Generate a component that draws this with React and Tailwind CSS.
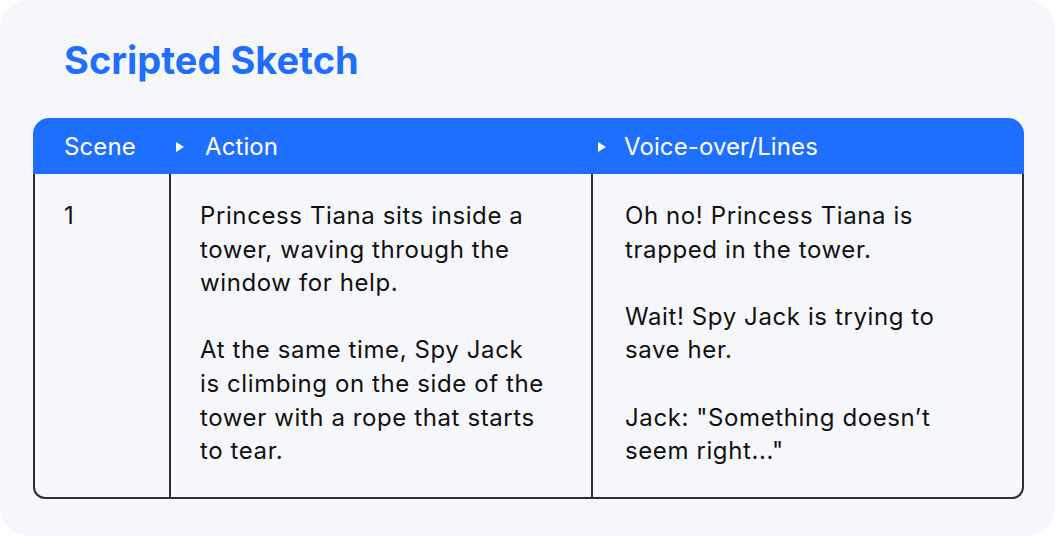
import React from "react";

const font = { fontFamily: "Inter, 'Noto Sans', sans-serif" };

function Arrow() {
  return (
    <svg width="8" height="10" viewBox="0 0 8 10" className="shrink-0">
      <path d="M0 0 L8 5 L0 10 Z" fill="white" />
    </svg>
  );
}

export default function App() {
  return (
    <div className="w-[1055px] h-[536px] bg-white" style={font}>
      <div className="w-full h-full rounded-[28px] bg-[#f6f7fb] pl-[33px] pr-[31px] pt-[36px]">
        <h1 className="pl-[31px] text-[38px] leading-[48px] font-bold text-[#1f6fff] tracking-[0px]">
          Scripted Sketch
        </h1>
        <div className="mt-[34px]">
          <div className="flex h-[56px] items-center rounded-t-[16px] bg-[#1f6fff] text-white text-[24px] tracking-[0.1px] pt-[1px]">
            <div className="w-[138px] pl-[31px]">Scene</div>
            <div className="w-[422px] flex items-center pl-[5px]">
              <Arrow />
              <span className="ml-[21px]">Action</span>
            </div>
            <div className="flex-1 flex items-center pl-[5px]">
              <Arrow />
              <span className="ml-[18px]">Voice-over/Lines</span>
            </div>
          </div>
          <div className="flex border-2 border-t-0 border-[#2c2c3a] rounded-b-[12px] text-[24px] leading-[33.6px] tracking-[0.6px] text-[#111111] whitespace-nowrap">
            <div className="w-[136px] border-r-2 border-[#2c2c3a] pl-[29px] pt-[25px]">1</div>
            <div className="w-[422px] border-r-2 border-[#2c2c3a] pl-[29px] pt-[25px] pb-[29px]">
              <p>Princess Tiana sits inside a<br />tower, waving through the<br />window for help.</p>
              <p className="mt-[33.6px]">At the same time, Spy Jack<br />is climbing on the side of the<br />tower with a rope that starts<br />to tear.</p>
            </div>
            <div className="flex-1 pl-[32px] pt-[25px] pb-[29px]">
              <p>Oh no! Princess Tiana is<br />trapped in the tower.</p>
              <p className="mt-[33.6px]">Wait! Spy Jack is trying to<br />save her.</p>
              <p className="mt-[33.6px]">Jack: "Something doesn’t<br />seem right..."</p>
            </div>
          </div>
        </div>
      </div>
    </div>
  );
}
